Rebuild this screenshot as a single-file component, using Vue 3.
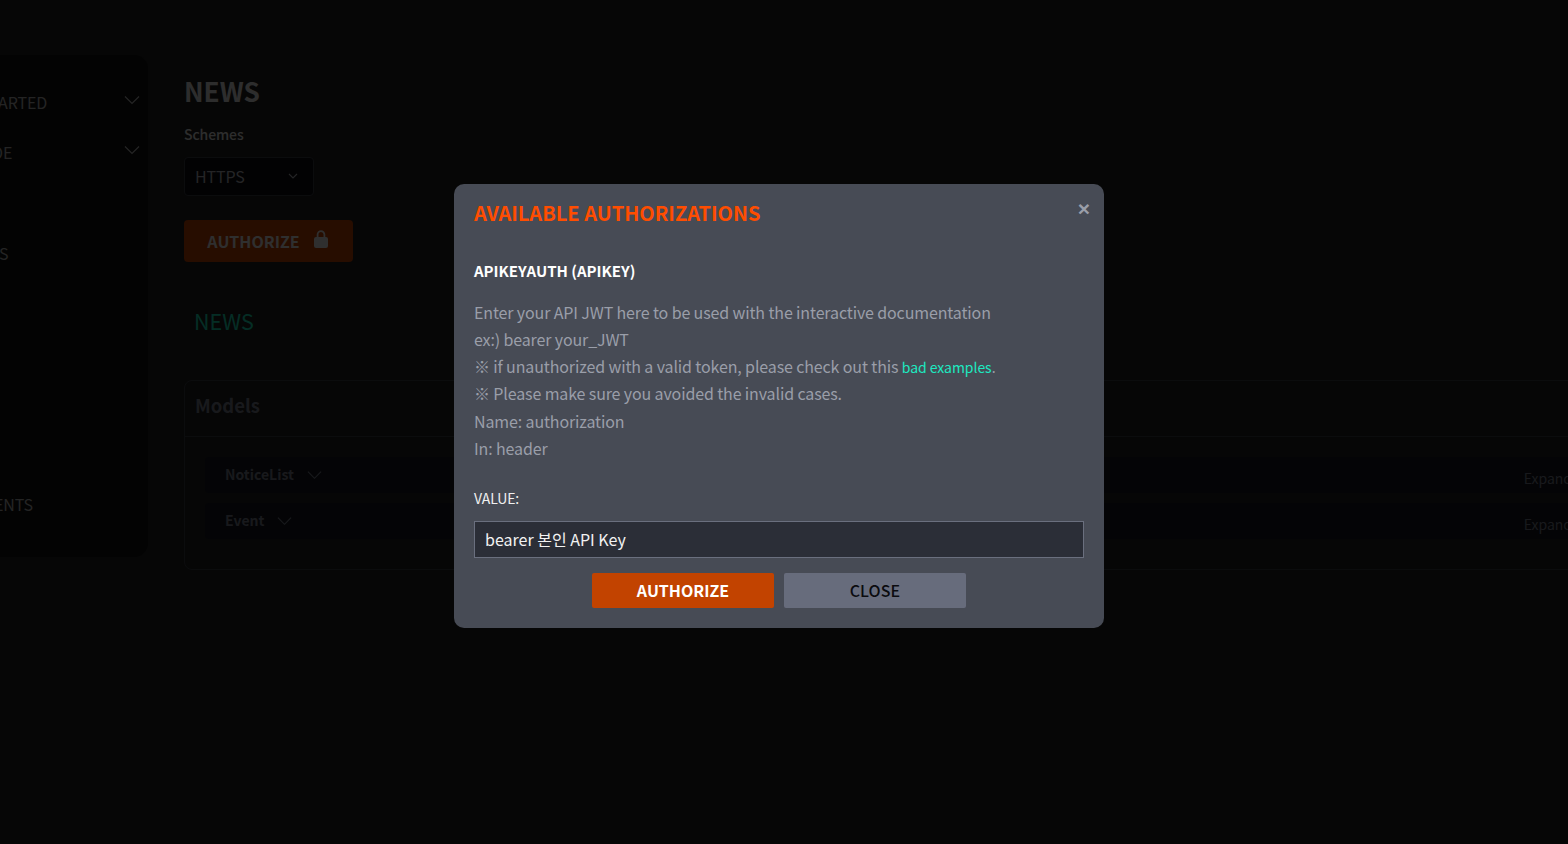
<script setup>
const navItems = [
  { label: 'ARTED', chevron: true, cls: 'n1' },
  { label: 'DE', chevron: true, cls: 'n2' },
  { label: 'S', chevron: false, cls: 'n3' },
  { label: 'ENTS', chevron: false, cls: 'n4' }
]
const models = ['NoticeList', 'Event']
const descriptionTop = [
  'Enter your API JWT here to be used with the interactive documentation',
  'ex:) bearer your_JWT'
]
const descriptionBottom = [
  '※ Please make sure you avoided the invalid cases.',
  'Name: authorization',
  'In: header'
]
</script>

<template>
  <div class="page">
    <aside class="sidebar">
      <div v-for="item in navItems" :key="item.label" class="nav-item" :class="item.cls">
        <span class="nav-label">{{ item.label }}</span>
        <svg v-if="item.chevron" class="nav-chevron" viewBox="0 0 16 10" fill="none">
          <path d="M1 1.5 8 8.5 15 1.5" stroke="currentColor" stroke-width="1.2" />
        </svg>
      </div>
    </aside>

    <main class="content">
      <h1 class="heading">NEWS</h1>
      <div class="schemes-label">Schemes</div>
      <div class="select">
        <span>HTTPS</span>
        <svg class="select-chevron" viewBox="0 0 10 6" fill="none">
          <path d="M1 1 5 5 9 1" stroke="currentColor" stroke-width="1.1" />
        </svg>
      </div>
      <div class="auth-btn">
        <span>AUTHORIZE</span>
        <svg class="lock" viewBox="0 0 14 18">
          <path d="M3.6 8V4.6a3.4 3.4 0 0 1 6.8 0V8" fill="none" stroke="currentColor" stroke-width="1.8" />
          <rect x="0" y="7" width="14" height="11" rx="2" fill="currentColor" />
        </svg>
      </div>
      <div class="tag">NEWS</div>
      <section class="models">
        <div class="models-head">Models</div>
        <div class="models-body">
          <div v-for="m in models" :key="m" class="model-row">
            <span class="model-name">{{ m }}</span>
            <svg class="model-chevron" viewBox="0 0 16 10" fill="none">
              <path d="M1 1.5 8 8.5 15 1.5" stroke="currentColor" stroke-width="1.2" />
            </svg>
            <span class="expand">Expand all</span>
          </div>
        </div>
      </section>
    </main>

    <div class="backdrop">
      <div class="modal">
        <button class="close-x">×</button>
        <h3 class="modal-title">AVAILABLE AUTHORIZATIONS</h3>
        <h4 class="scheme-title">APIKEYAUTH (APIKEY)</h4>
        <div class="desc">
          <p v-for="line in descriptionTop" :key="line">{{ line }}</p>
          <p>※ if unauthorized with a valid token, please check out this <a class="bad">bad examples</a><span class="dot">.</span></p>
          <p v-for="line in descriptionBottom" :key="line">{{ line }}</p>
        </div>
        <label class="value-label">VALUE:</label>
        <div class="input">bearer 본인 API Key</div>
        <div class="actions">
          <button class="btn primary">AUTHORIZE</button>
          <button class="btn secondary">CLOSE</button>
        </div>
      </div>
    </div>
  </div>
</template>

<style>
html, body { margin: 0; background: #1e1e1e; }
</style>

<style scoped>
.page {
  position: relative;
  display: flex;
  width: 1568px;
  height: 844px;
  overflow: hidden;
  background: #1e1e1e;
  font-family: "Noto Sans CJK KR", "Noto Sans", sans-serif;
  color: #fff;
}
.sidebar {
  flex: none;
  width: 148px;
  height: 502px;
  margin-top: 55px;
  background: #101010;
  border-radius: 0 14px 14px 0;
  color: #b4b4b4;
  overflow: hidden;
}
.nav-item { display: flex; align-items: center; justify-content: space-between; padding-right: 8px; height: 24px; font-size: 16px; }
.nav-item.n1 { margin-top: 35px; }
.nav-item.n2 { margin-top: 26px; }
.nav-item.n3 { margin-top: 77px; }
.nav-item.n4 { margin-top: 227px; }
.nav-label { white-space: nowrap; letter-spacing: -0.1px; }
.n1 .nav-label { margin-left: -2px; }
.n2 .nav-label { margin-left: -8px; }
.n3 .nav-label { margin-left: -1px; }
.n4 .nav-label { margin-left: -6px; }
.nav-chevron { width: 16px; height: 10px; margin-top: -5px; }

.content {
  flex: none;
  width: 1428px;
  margin-left: 36px;
}
.heading { margin: 71px 0 0; height: 40px; line-height: 40px; font-size: 26.2px; font-weight: 700; color: #e0e0e0; }
.schemes-label { margin-top: 13px; height: 20px; line-height: 20px; font-size: 14px; font-weight: 500; color: #e0e0e0; letter-spacing: -0.1px; }
.select {
  box-sizing: border-box;
  display: flex;
  align-items: center;
  justify-content: space-between;
  width: 130px;
  height: 39px;
  margin-top: 13px;
  padding: 0 15px 0 10px;
  background: #0a0c10;
  border: 1px solid #3a3c44;
  border-radius: 4px;
  font-size: 16px;
  line-height: 37px;
  color: #b4b4bc;
  letter-spacing: -0.1px;
}
.select span { margin-top: -1px; }
.select-chevron { width: 10px; height: 6px; margin-top: -2px; }
.auth-btn {
  display: flex;
  align-items: center;
  justify-content: center;
  gap: 14px;
  width: 169px;
  height: 42px;
  margin-top: 24px;
  padding-right: 4px;
  box-sizing: border-box;
  background: #c24300;
  border-radius: 4px;
  font-size: 16px;
  font-weight: 700;
  color: #e8e8e8;
}
.auth-btn span { margin-left: 2px; }
.lock { width: 14px; height: 18px; margin-top: -4px; }
.tag { margin: 43px 0 0 10px; height: 32px; line-height: 32px; font-size: 21.5px; color: #1de9c0; opacity: 0.95; }
.models {
  box-sizing: border-box;
  height: 190px;
  margin-top: 43px;
  border: 1px solid #3a3c44;
  border-radius: 8px;
}
.models-head {
  box-sizing: border-box;
  height: 56px;
  padding-left: 10px;
  line-height: 49px;
  font-size: 18.5px;
  font-weight: 700;
  color: #7a7e8c;
  border-bottom: 1px solid #3a3c44;
}
.models-body { padding: 20px 0 0 20px; }
.model-row {
  display: flex;
  align-items: center;
  height: 36px;
  margin-bottom: 10px;
  padding-left: 20px;
  background: #14181f;
  border-radius: 4px;
  color: #7a7e8c;
  font-size: 14px;
  font-weight: 700;
}
.model-name { margin-top: -2px; }
.model-chevron { width: 15px; height: 10px; margin-left: 13px; }
.expand { margin-left: auto; margin-top: 6px; font-size: 14px; font-weight: 400; color: #7a7e8c; padding-right: 20px; }

.backdrop {
  position: absolute;
  inset: 0;
  display: flex;
  justify-content: center;
  align-items: flex-start;
  padding: 184px 10px 0 0;
  background: rgba(0, 0, 0, 0.8);
  box-sizing: border-box;
}
.modal {
  position: relative;
  box-sizing: border-box;
  width: 650px;
  height: 444px;
  padding: 0 20px;
  background: #474b55;
  border-radius: 10px;
}
.close-x {
  position: absolute;
  top: 13px;
  right: 13px;
  width: 14px;
  height: 24px;
  padding: 0;
  border: 0;
  background: none;
  font: 700 21px/24px "Liberation Sans", sans-serif;
  color: #9a9ea9;
}
.modal-title { margin: 0; padding-top: 14px; height: 30px; line-height: 30px; font-size: 20px; font-weight: 700; color: #ff4d00; }
.scheme-title { margin: 31px 0 0; height: 24px; line-height: 24px; font-size: 15px; font-weight: 700; color: #fff; }
.desc { margin-top: 15.7px; font-size: 16px; line-height: 27.2px; color: #9a9ea9; letter-spacing: -0.13px; }
.desc p { margin: 0; }
.bad { font-size: 14px; line-height: 1; color: #1de9c0; letter-spacing: -0.05px; }
.dot { font-size: 14px; line-height: 1; }
.value-label { display: block; margin-top: 25.3px; height: 22px; line-height: 22px; font-size: 14px; color: #f0f0f0; letter-spacing: -0.1px; }
.input {
  box-sizing: border-box;
  height: 37px;
  margin-top: 12px;
  padding: 0 10px;
  line-height: 35px;
  font-size: 16px;
  color: #f2f2f2;
  background: #2b2e37;
  border: 1px solid #6a6f7e;
}
.actions { display: flex; justify-content: center; gap: 10px; margin-top: 15px; }
.btn {
  width: 182px;
  height: 35px;
  border: 0;
  border-radius: 2px;
  padding: 0 0 1px;
  font-family: inherit;
  font-size: 16px;
  font-weight: 700;
}
.primary { background: #c24300; color: #fff; }
.secondary { background: #676c7c; color: #0b0b0f; font-weight: 500; letter-spacing: 0.1px; }
</style>
